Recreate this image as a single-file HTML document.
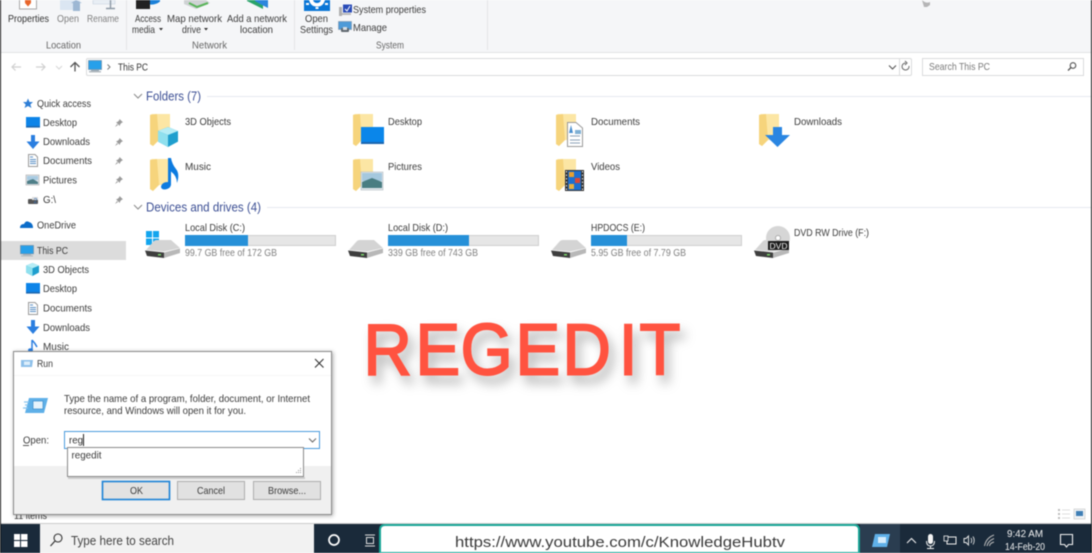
<!DOCTYPE html>
<html><head><meta charset="utf-8"><style>
html,body{margin:0;padding:0;background:#fff;width:1092px;height:553px;overflow:hidden}
svg{display:block;filter:blur(.45px)}
text{font-family:"Liberation Sans",sans-serif;font-size:10.5px;fill:#333}
.g{fill:#808080}.l{fill:#3c3c3c}.d{fill:#666}
.h{font-size:13px;fill:#3c4f94}
</style></head><body>
<svg width="1092" height="553" viewBox="0 0 1092 553" xmlns="http://www.w3.org/2000/svg">
<defs>
<filter id="sh" x="-10%" y="-30%" width="125%" height="180%"><feDropShadow dx="5" dy="8" stdDeviation="5.500" flood-color="#000" flood-opacity=".28"/></filter>
<filter id="ds" x="-10%" y="-10%" width="125%" height="125%"><feDropShadow dx="1" dy="1" stdDeviation="2" flood-color="#000" flood-opacity=".35"/></filter>
<symbol id="fo" viewBox="0 0 20 33" preserveAspectRatio="none" overflow="visible"><path d="M0 2 L2 1 H20 V27 H9 L3 33 L0 31Z" fill="#fce6a4"/><path d="M0 2 L7 1 L9 27 L3 33 L0 31Z" fill="#f6d47c"/></symbol>
<symbol id="hd" viewBox="0 0 36 19" preserveAspectRatio="none" overflow="visible"><path d="M1 11 L9 2 Q10 1 12 1 H26 L35 9 L19 12.500Z" fill="#d4d4d4"/><path d="M0 11.500 L19 13.500 V19 L2 17Z" fill="#3e3e3e"/><path d="M19 13.500 L35 9.500 V14 L19 19Z" fill="#b8b8b8"/><rect x="13" y="15" width="3" height="1.500" fill="#7ad66a"/></symbol>
<symbol id="pin" viewBox="0 0 8 8" overflow="visible"><path d="M4.500 0 L8 3.400 L6.600 3.800 L5 5.600 L4.800 7 L1 3.200 L2.400 3 L4.200 1.400Z M2 5 L0 8 L3 6Z" fill="#9a9a9a"/></symbol>
<symbol id="dt" viewBox="0 0 14 11" preserveAspectRatio="none" overflow="visible"><rect width="14" height="10" fill="#0d84e8"/><rect y="9" width="14" height="1.600" fill="#1b66b0"/></symbol>
<symbol id="dn" viewBox="0 0 13 14" overflow="visible"><path d="M4.500 0H8.500V6.500H13L6.500 14L0 6.500H4.500Z" fill="#2a7ee0"/></symbol>
<symbol id="doc" viewBox="0 0 10 13" overflow="visible"><path d="M.5.5H7L9.500 3V12.500H.5Z" fill="#fff" stroke="#9a9a9a"/><path d="M2 3H5M2 5.500H8M2 7.500H8M2 9.500H8" stroke="#5a8fc4"/></symbol>
<symbol id="pic" viewBox="0 0 13 10" overflow="visible"><rect width="13" height="10" fill="#dfe5ea" stroke="#aaa" stroke-width=".6"/><rect x="1" y="1" width="11" height="4" fill="#a9cbe2"/><path d="M1 6 L7 4 L12 7 V9 H1Z" fill="#4f7f88"/></symbol>
<symbol id="cube" viewBox="0 0 14 15" preserveAspectRatio="none" overflow="visible"><path d="M7 0L14 3V11L7 15L0 11V3Z" fill="#1f9fce"/><path d="M7 0L14 3L7 6L0 3Z" fill="#b6edf5"/><path d="M0 3L7 6V15L0 11Z" fill="#8fe0ee"/></symbol>
<symbol id="pc" viewBox="0 0 14 13" preserveAspectRatio="none" overflow="visible"><rect x=".5" y=".5" width="13" height="9" fill="#27a0ea" stroke="#6d8ea8" stroke-width=".7"/><rect x="3" y="10" width="8" height="1" fill="#9aa7b0"/><rect x="1" y="11" width="12" height="1.500" fill="#b4bcc2"/></symbol>
</defs>

<rect width="1092" height="553" fill="#fff"/>
<!-- ribbon -->
<rect width="1092" height="52" fill="#f5f6f8"/>
<rect y="52" width="1092" height="1" fill="#e2e3e4"/>
<path d="M126.500 0V50M294.500 0V50M487.500 0V50" stroke="#e4e5e7"/>
<path d="M19.500 0V9H36.500V0" fill="#fff" stroke="#a8a8a8"/><path d="M25 0H31V3L28 6.500L25 3Z" fill="#e8662c"/>
<path d="M60 0H80V10H60Z" fill="#dbe6f2"/><path d="M71 3H82L76 0Z M73 3H80V11H73Z" fill="#9db7d3"/>
<path d="M93 0H115V4H93Z" fill="#e8eef5" stroke="#c5d0dc" stroke-width=".6"/><path d="M110.500 0V9M106 8.500H115" stroke="#8d99a6" stroke-width="1.400"/>
<rect x="136" y="0" width="14" height="9" fill="#222"/><path d="M150 0H160V1.500Q156 5 150 4.500Z" fill="#1a80d8"/>
<path d="M184 0H206L210 3L196 9L184 4Z" fill="#cfd2d4"/><path d="M189 3L197 7L208 3" stroke="#5ab45a" stroke-width="2" fill="none"/>
<path d="M247 0H256L263 4V9L257 6L247 1Z" fill="#2aa36a"/><path d="M255 0H268V8L262 5L255 1Z" fill="#2c86dd"/>
<rect x="304" y="0" width="26" height="11" fill="#0a76d6"/><path d="M309 0Q311 7 317 6.500Q323 7 325 0H321Q320 3 317 3Q314 3 313 0Z M306 3H309V5H306Z M325 3H328V5H325Z M315.500 7H318.500V9H315.500Z" fill="#fff"/>
<rect x="343" y="4.500" width="9" height="8" fill="#2a4cb8"/><path d="M345 9L347 11L350 6" stroke="#fff" fill="none"/><rect x="339" y="7" width="3" height="9" fill="#b0b0b0"/><rect x="342" y="13" width="9" height="2" fill="#bbb"/>
<rect x="338.500" y="21.500" width="13" height="8" fill="#4d9ad8" stroke="#7c93a8" stroke-width=".6"/><rect x="341" y="28" width="8" height="4" rx="1" fill="#606870"/><rect x="343" y="27" width="4" height="3" fill="#d6dde3"/>

<text x="8" y="22" textLength="41" lengthAdjust="spacingAndGlyphs">Properties</text>
<text x="57" y="22" class="g" textLength="22" lengthAdjust="spacingAndGlyphs">Open</text>
<text x="87" y="22" class="g" textLength="32" lengthAdjust="spacingAndGlyphs">Rename</text>
<text x="135" y="22" class="l" textLength="26" lengthAdjust="spacingAndGlyphs">Access</text><text x="132" y="33" class="l" textLength="23" lengthAdjust="spacingAndGlyphs">media</text><path d="M159 28h4l-2 2.500z" fill="#333"/>
<text x="167" y="22" class="l" textLength="55" lengthAdjust="spacingAndGlyphs">Map network</text><text x="182" y="33" class="l" textLength="19" lengthAdjust="spacingAndGlyphs">drive</text><path d="M204 28h4l-2 2.500z" fill="#333"/>
<text x="227" y="22" class="l" textLength="60" lengthAdjust="spacingAndGlyphs">Add a network</text><text x="240" y="33" class="l" textLength="33" lengthAdjust="spacingAndGlyphs">location</text>
<text x="305" y="22" class="l" textLength="23" lengthAdjust="spacingAndGlyphs">Open</text><text x="300" y="33" class="l" textLength="33" lengthAdjust="spacingAndGlyphs">Settings</text>
<text x="353" y="13" class="l" textLength="73" lengthAdjust="spacingAndGlyphs">System properties</text>
<text x="353" y="31" class="l" textLength="34" lengthAdjust="spacingAndGlyphs">Manage</text>
<text x="46" y="48.500" class="d" textLength="35" lengthAdjust="spacingAndGlyphs">Location</text>
<text x="192" y="48.500" class="d" textLength="35" lengthAdjust="spacingAndGlyphs">Network</text>
<text x="376" y="48.500" class="d" textLength="28" lengthAdjust="spacingAndGlyphs">System</text>
<path d="M922 0Q926 4 930 2V5L927 7H924Z" fill="#9a9a9a" opacity=".7"/>

<!-- nav -->
<path d="M21 67H12M15.500 63.500L12 67L15.500 70.500" stroke="#d0d0d0" fill="none" stroke-width="1.200"/>
<path d="M36 67H45M41.500 63.500L45 67L41.500 70.500" stroke="#d0d0d0" fill="none" stroke-width="1.200"/>
<path d="M56 66L59 69L62 66" stroke="#d6d6d6" fill="none"/>
<path d="M75 71.500V62.500M70.500 67L75 62.500L79.500 67" stroke="#555" fill="none" stroke-width="1.300"/>
<rect x="86.500" y="58.500" width="825" height="17" rx="1.500" fill="#fff" stroke="#dadbdc"/>
<use href="#pc" x="88" y="60" width="14" height="13"/>
<path d="M107.500 64.500L110 67L107.500 69.500" stroke="#777" fill="none"/>
<text x="118" y="70.500" textLength="30" lengthAdjust="spacingAndGlyphs">This PC</text>
<path d="M889 65.500L892.500 69L896 65.500" stroke="#555" fill="none" stroke-width="1.100"/>
<path d="M899.500 58.500V75" stroke="#dadbdc"/>
<path d="M909 66A3.500 3.500 0 1 1 905.500 63M905 61L907 63L905 65" stroke="#666" fill="none"/>
<rect x="922.500" y="58.500" width="161" height="17" fill="#fff" stroke="#dadbdc"/>
<text x="929" y="70" style="fill:#7a7a7a" textLength="61" lengthAdjust="spacingAndGlyphs">Search This PC</text>
<circle cx="1073" cy="65.500" r="2.800" stroke="#555" fill="none" stroke-width="1.100"/><path d="M1071 67.500L1068 70.500" stroke="#555" stroke-width="1.300"/>

<!-- sidebar -->
<path d="M28 98.500L29.500 102H33L30.300 104.500L31.500 108L28 106L24.500 108L25.700 104.500L23 102H26.500Z" fill="#2e7ed6"/>
<text x="37" y="107" class="l" textLength="54" lengthAdjust="spacingAndGlyphs">Quick access</text>
<use href="#dt" x="26" y="117" width="14" height="11"/><text x="43" y="126" class="l" textLength="34" lengthAdjust="spacingAndGlyphs">Desktop</text>
<use href="#dn" x="26.500" y="135" width="13" height="14"/><text x="43" y="145" class="l" textLength="47" lengthAdjust="spacingAndGlyphs">Downloads</text>
<use href="#doc" x="28" y="154" width="10" height="13"/><text x="43" y="164" class="l" textLength="49" lengthAdjust="spacingAndGlyphs">Documents</text>
<use href="#pic" x="26" y="175" width="13" height="10"/><text x="43" y="183.500" class="l" textLength="34" lengthAdjust="spacingAndGlyphs">Pictures</text>
<rect x="28" y="199" width="10" height="5" rx="1" fill="#555"/><rect x="32" y="197" width="6" height="3" fill="#ddd"/><text x="33.500" y="203" style="font-size:7px;fill:#3a70b0">2</text>
<text x="43" y="203" class="l" textLength="13" lengthAdjust="spacingAndGlyphs">G:\</text>
<use href="#pin" x="115" y="119" width="8" height="8"/><use href="#pin" x="115" y="138" width="8" height="8"/><use href="#pin" x="115" y="157" width="8" height="8"/><use href="#pin" x="115" y="176" width="8" height="8"/><use href="#pin" x="115" y="196" width="8" height="8"/>
<path d="M20 228Q20 224 24 224Q26 220 29 222Q33 223 33 228Z" fill="#0b6cc9"/>
<text x="37" y="228.500" class="l" textLength="39" lengthAdjust="spacingAndGlyphs">OneDrive</text>
<rect x="1" y="241" width="125" height="19" fill="#dcdcdc"/>
<use href="#pc" x="20" y="245" width="14" height="12"/>
<text x="37" y="254" class="l" textLength="31" lengthAdjust="spacingAndGlyphs">This PC</text>
<use href="#cube" x="26" y="263" width="13" height="13"/><text x="43" y="273" class="l" textLength="46" lengthAdjust="spacingAndGlyphs">3D Objects</text>
<use href="#dt" x="26" y="283" width="14" height="11"/><text x="43" y="292" class="l" textLength="34" lengthAdjust="spacingAndGlyphs">Desktop</text>
<use href="#doc" x="28" y="302" width="10" height="13"/><text x="43" y="311.500" class="l" textLength="49" lengthAdjust="spacingAndGlyphs">Documents</text>
<use href="#dn" x="26.500" y="320" width="13" height="14"/><text x="43" y="331" class="l" textLength="47" lengthAdjust="spacingAndGlyphs">Downloads</text>
<path d="M32 340V350M32 340Q35 343 37 347" stroke="#2a7ee0" stroke-width="1.500" fill="none"/><ellipse cx="30.500" cy="350" rx="2.500" ry="1.800" fill="#2a7ee0"/>
<text x="43" y="350" class="l" textLength="26" lengthAdjust="spacingAndGlyphs">Music</text>

<!-- content -->
<path d="M134 94L138 98L142 94" stroke="#8a8a8a" fill="none"/>
<text x="146" y="100.500" class="h" textLength="55" lengthAdjust="spacingAndGlyphs">Folders (7)</text>
<rect x="207" y="96" width="885" height="1" fill="#e6e9f0"/>
<path d="M134 205L138 209L142 205" stroke="#8a8a8a" fill="none"/>
<text x="146" y="211.500" class="h" textLength="115" lengthAdjust="spacingAndGlyphs">Devices and drives (4)</text>
<rect x="267" y="207" width="825" height="1" fill="#e6e9f0"/>

<use href="#fo" x="150" y="113" width="20" height="33"/><use href="#cube" x="158" y="127" width="20" height="20"/>
<text x="185" y="125" class="l" textLength="46" lengthAdjust="spacingAndGlyphs">3D Objects</text>
<use href="#fo" x="353" y="113" width="20" height="33"/><rect x="361" y="127" width="23" height="17" fill="#0a86ea"/><rect x="361" y="142" width="23" height="2" fill="#1b66b0"/>
<text x="388" y="125" class="l" textLength="34" lengthAdjust="spacingAndGlyphs">Desktop</text>
<use href="#fo" x="556" y="113" width="20" height="33"/><path d="M567.500 122.500H576L582.500 128V146.500H567.500Z" fill="#fff" stroke="#9a9a9a"/><path d="M570 136H580M570 140H580M570 143H580" stroke="#8aa0b8"/><rect x="575" y="130" width="6" height="4" fill="#7fb0d4"/><path d="M571 125L569 133H573Z" fill="#4a90d0"/>
<text x="591" y="125" class="l" textLength="49" lengthAdjust="spacingAndGlyphs">Documents</text>
<use href="#fo" x="759" y="113" width="20" height="33"/><path d="M773 127H782V135H790L777.500 147L765 135H773Z" fill="#2a86e2"/>
<text x="794" y="125" class="l" textLength="48" lengthAdjust="spacingAndGlyphs">Downloads</text>

<use href="#fo" x="150" y="158" width="20" height="33"/><path d="M168 158H171Q172 164 176 169Q180 174 177 183Q177 176 171 171.500V185Q170 189 165 189.500Q161 189.500 161 186.500Q162 182 168 182Z" fill="#0c7be0"/>
<text x="185" y="170" class="l" textLength="26" lengthAdjust="spacingAndGlyphs">Music</text>
<use href="#fo" x="353" y="158" width="20" height="33"/><rect x="361" y="172" width="22" height="18" fill="#dfe5ea" stroke="#b5bcc2" stroke-width=".6"/><rect x="362" y="173" width="20" height="8" fill="#a5c8de"/><path d="M362 182L372 178L382 182V188H362Z" fill="#497d82"/>
<text x="388" y="170" class="l" textLength="34" lengthAdjust="spacingAndGlyphs">Pictures</text>
<use href="#fo" x="556" y="158" width="20" height="33"/><rect x="565" y="170" width="19" height="21" fill="#333"/><rect x="568" y="171" width="13" height="19" fill="#1e6fd0"/><rect x="569" y="172" width="5" height="5" fill="#e8a030"/><rect x="575" y="178" width="5" height="5" fill="#d8483a"/><rect x="569" y="184" width="5" height="5" fill="#e8b040"/>
<path d="M566.500 171V190M582.500 171V190" stroke="#eee" stroke-dasharray="1.500 2"/>
<text x="591" y="170" class="l" textLength="29" lengthAdjust="spacingAndGlyphs">Videos</text>

<rect x="146" y="231" width="6" height="6.500" fill="#12a5ee"/><rect x="153" y="231" width="6" height="6.500" fill="#12a5ee"/><rect x="146" y="238.500" width="6" height="6.500" fill="#12a5ee"/><rect x="153" y="238.500" width="6" height="6.500" fill="#12a5ee"/>
<use href="#hd" x="145" y="239" width="36" height="19"/>
<text x="185" y="231" class="l" textLength="60" lengthAdjust="spacingAndGlyphs">Local Disk (C:)</text>
<rect x="185.500" y="235.500" width="150" height="10" fill="#e6e6e6" stroke="#cfcfcf"/><rect x="185" y="235" width="63" height="11" fill="#2690d8"/>
<text x="185" y="256" class="g" textLength="92" lengthAdjust="spacingAndGlyphs">99.7 GB free of 172 GB</text>

<use href="#hd" x="348" y="239" width="36" height="19"/>
<text x="388" y="231" class="l" textLength="60" lengthAdjust="spacingAndGlyphs">Local Disk (D:)</text>
<rect x="388.500" y="235.500" width="150" height="10" fill="#e6e6e6" stroke="#cfcfcf"/><rect x="388" y="235" width="81" height="11" fill="#2690d8"/>
<text x="388" y="256" class="g" textLength="90" lengthAdjust="spacingAndGlyphs">339 GB free of 743 GB</text>

<use href="#hd" x="551" y="239" width="36" height="19"/>
<text x="591" y="231" class="l" textLength="54" lengthAdjust="spacingAndGlyphs">HPDOCS (E:)</text>
<rect x="591.500" y="235.500" width="150" height="10" fill="#e6e6e6" stroke="#cfcfcf"/><rect x="591" y="235" width="36" height="11" fill="#2690d8"/>
<text x="591" y="256" class="g" textLength="95" lengthAdjust="spacingAndGlyphs">5.95 GB free of 7.79 GB</text>

<use href="#hd" x="754" y="239" width="36" height="19"/>
<circle cx="778" cy="238" r="12" fill="#d6d6d6"/><circle cx="778" cy="238" r="2.500" fill="#fff" stroke="#aaa"/>
<rect x="768" y="241" width="21" height="9" fill="#1c1c1c"/><text x="769.500" y="249" style="font-size:8.500px;fill:#eee" textLength="18" lengthAdjust="spacingAndGlyphs">DVD</text>
<text x="794" y="236" class="l" textLength="75" lengthAdjust="spacingAndGlyphs">DVD RW Drive (F:)</text>

<!-- REGEDIT -->
<g filter="url(#sh)"><text transform="scale(.93 1)" x="390.900 446.800 495.300 554.300 604.800 665.400 687.700" y="374.500" style="font-size:72px;fill:#ff5340;stroke:#ff5340;stroke-width:2px">REGEDIT</text></g>

<!-- status -->
<text x="14" y="519" class="l" textLength="33" lengthAdjust="spacingAndGlyphs">11 items</text>
<path d="M1058 509h2v2h-2zM1058 513h2v2h-2zM1058 517h2v2h-2z" fill="#bbb"/><path d="M1062 510h8M1062 514h8M1062 518h8" stroke="#ddd"/>
<rect x="1074" y="509" width="11" height="10" fill="#eef1f4" stroke="#ccc" stroke-width=".7"/><rect x="1076" y="511" width="7" height="5" fill="#3f7fb5"/>

<!-- Run dialog -->
<rect x="13.500" y="351.500" width="318" height="163" fill="#fff" stroke="#8a8a8a" filter="url(#ds)"/>
<rect x="14" y="466" width="317" height="48" fill="#f0f0f0"/>
<rect x="14" y="375" width="317" height="1" fill="#f6f6f6"/>
<path d="M21 360H33L32 367H21Z" fill="#8ec0ea"/><rect x="24" y="361.500" width="6" height="3.500" fill="#dceefb"/>
<text x="37" y="367" class="l" textLength="16" lengthAdjust="spacingAndGlyphs">Run</text>
<path d="M315 359L323.500 367.500M323.500 359L315 367.500" stroke="#333" stroke-width="1.100"/>
<path d="M29 398H48L44 413H25Z" fill="#5fb0e8"/><rect x="33" y="401" width="10" height="8" fill="#e6f3fc" stroke="#3b8ccc" stroke-width=".7"/><path d="M24 402H29M25 405H28M23 408H28" stroke="#88c4ee" stroke-width="1.200"/>
<text x="64" y="402" class="l" textLength="246" lengthAdjust="spacingAndGlyphs">Type the name of a program, folder, document, or Internet</text>
<text x="64" y="414" class="l" textLength="182" lengthAdjust="spacingAndGlyphs">resource, and Windows will open it for you.</text>
<text x="23" y="443.500" class="l" textLength="26" lengthAdjust="spacingAndGlyphs">Open:</text><rect x="23" y="445" width="6" height="1" fill="#555"/>
<rect x="64.500" y="431.500" width="255" height="17" fill="#fff" stroke="#4a9bdc"/>
<text x="69" y="443.500" textLength="14" lengthAdjust="spacingAndGlyphs">reg</text><rect x="83" y="434" width="1" height="12" fill="#222"/>
<path d="M309 438.500L312.500 442L316 438.500" stroke="#666" fill="none"/>
<rect x="67.500" y="447.500" width="236" height="29" fill="#fff" stroke="#8a8a8a"/>
<rect x="68" y="477" width="237" height="2" fill="#aaa" opacity=".5"/>
<text x="71.500" y="458.500" class="l" textLength="30" lengthAdjust="spacingAndGlyphs">regedit</text>
<path d="M300 468h1v1h-1zM298 470h1v1h-1zM300 470h1v1h-1zM296 472h1v1h-1zM298 472h1v1h-1zM300 472h1v1h-1z" fill="#999"/>
<rect x="102.500" y="481.500" width="67" height="18" fill="#e2e2e2" stroke="#1b82d6" stroke-width="1.600"/>
<text x="130" y="494" class="l" textLength="13" lengthAdjust="spacingAndGlyphs">OK</text>
<rect x="177.500" y="481.500" width="67" height="18" fill="#e1e1e1" stroke="#adadad"/>
<text x="197" y="494" class="l" textLength="28" lengthAdjust="spacingAndGlyphs">Cancel</text>
<rect x="253.500" y="481.500" width="67" height="18" fill="#e1e1e1" stroke="#adadad"/>
<text x="268" y="494" class="l" textLength="38" lengthAdjust="spacingAndGlyphs">Browse...</text>

<!-- taskbar -->
<rect y="523" width="1092" height="1" fill="#ccc"/>
<rect y="524" width="1092" height="29" fill="#1a2a3a"/>
<rect x="14" y="534" width="6" height="6" fill="#fff"/><rect x="21" y="534" width="6.500" height="6" fill="#fff"/><rect x="14" y="541" width="6" height="6" fill="#fff"/><rect x="21" y="541" width="6.500" height="6" fill="#fff"/>
<rect x="40" y="524" width="274" height="29" fill="#f2f2f2"/>
<circle cx="58" cy="538" r="4" fill="none" stroke="#333" stroke-width="1.100"/><path d="M55 541L50.500 546" stroke="#333" stroke-width="1.200"/>
<text x="71" y="545" style="font-size:12.500px;fill:#444" textLength="103" lengthAdjust="spacingAndGlyphs">Type here to search</text>
<circle cx="334" cy="540" r="5" fill="none" stroke="#fff" stroke-width="1.700"/>
<path d="M365 535h10M365 546h10" stroke="#ddd"/><rect x="366.500" y="537.500" width="7" height="6" fill="none" stroke="#ddd"/>

<path d="M380 553V530Q380 525 385 525H854Q859 525 859 530V553Z" fill="#fff" stroke="#18a596" stroke-width="2"/>
<text x="455" y="547" textLength="330" lengthAdjust="spacingAndGlyphs" style="font-size:15px;fill:#3a3a3a">https://www.youtube.com/c/KnowledgeHubtv</text>

<rect x="860" y="524" width="40" height="29" fill="#2a3d50"/>
<path d="M875 534H890L887 547H872Z" fill="#5fb0e8"/><rect x="878" y="537" width="8" height="6" fill="#d6ecfb"/>
<path d="M907 543L911.500 538.500L916 543" stroke="#eee" fill="none" stroke-width="1.100"/>
<rect x="928" y="534" width="5" height="10" rx="2.500" fill="#f4f4f4"/><path d="M926.500 541Q926.500 546 930.500 546Q934.500 546 934.500 541M930.500 546V548M927 548.500H934" stroke="#f4f4f4" fill="none"/>
<rect x="947" y="537" width="9" height="7" fill="none" stroke="#eee"/><rect x="944" y="536" width="4" height="5" fill="#1a2a3a" stroke="#eee" stroke-width=".8"/>
<path d="M964 538.500H966L968.500 536V545L966 542.500H964Z" fill="none" stroke="#eee" stroke-width=".9"/><path d="M971 538Q972.500 540.500 971 543M973 536.500Q975.500 540.500 973 544.500" stroke="#eee" fill="none" stroke-width=".8"/>
<path d="M984.500 546Q986 538 994 535M987 546Q988 541 994 538.500M989.500 546Q990 543 994 542" stroke="#bbb" fill="none" stroke-width="1"/>
<text x="1007" y="537" style="font-size:10.500px;fill:#f2f2f2" textLength="36" lengthAdjust="spacingAndGlyphs">9:42 AM</text>
<text x="1005" y="550" style="font-size:10.500px;fill:#f2f2f2" textLength="40" lengthAdjust="spacingAndGlyphs">14-Feb-20</text>
<path d="M1060.500 534.500H1072.500V544.500H1068.500L1066.500 547L1064.500 544.500H1060.500Z" fill="none" stroke="#f2f2f2" stroke-width="1.100"/>

<rect x="0" y="0" width="1" height="553" fill="#111"/><rect x="1091" y="0" width="1" height="553" fill="#111"/>
</svg>
</body></html>
